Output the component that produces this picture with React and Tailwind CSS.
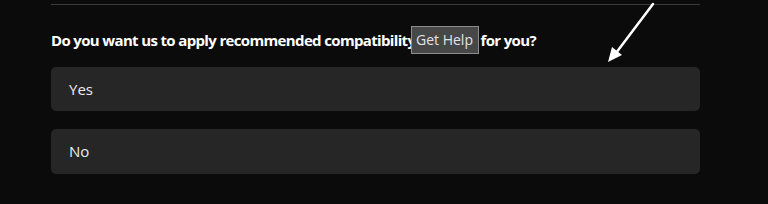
export default function App() {
  return (
    <div className="relative w-[768px] h-[204px] bg-[#0b0b0b] overflow-hidden" style={{ fontFamily: '"Open Sans", "Noto Sans", sans-serif' }}>
      <div className="pl-[51px] pr-[68px] pt-[4px]">
        <div className="h-px bg-[#3a3a3a]"></div>
        <h2 className="mt-[24px] text-[15px] leading-[22px] font-bold text-white tracking-[-0.65px] whitespace-nowrap">
          Do you want us to apply recommended compatibilit
          <span className="relative inline-block w-[73px]">
            y settings
            <span className="absolute left-[3px] -top-[3px] w-[68px] h-[28px] bg-[#474747] border border-[#8c8c8c] flex items-center justify-center text-[14px] font-normal tracking-normal text-[#e4e4e4]">
              Get Help
            </span>
          </span>
          for you?
        </h2>
        <div className="mt-[16px] flex flex-col gap-[18px]">
          <div className="h-[44px] rounded-[5px] bg-[#262626] flex items-center px-[18px] text-[15px] text-[#ececec]">Yes</div>
          <div className="h-[45px] rounded-[5px] bg-[#262626] flex items-center px-[18px] text-[15px] text-[#ececec]">No</div>
        </div>
      </div>
      <svg className="absolute left-0 top-0" width="768" height="204" viewBox="0 0 768 204">
        <line x1="653" y1="4" x2="616" y2="53" stroke="#ffffff" strokeWidth="2.5" strokeLinecap="round" />
        <polygon points="608,62 612,47 622,55" fill="#ffffff" />
      </svg>
    </div>
  );
}
